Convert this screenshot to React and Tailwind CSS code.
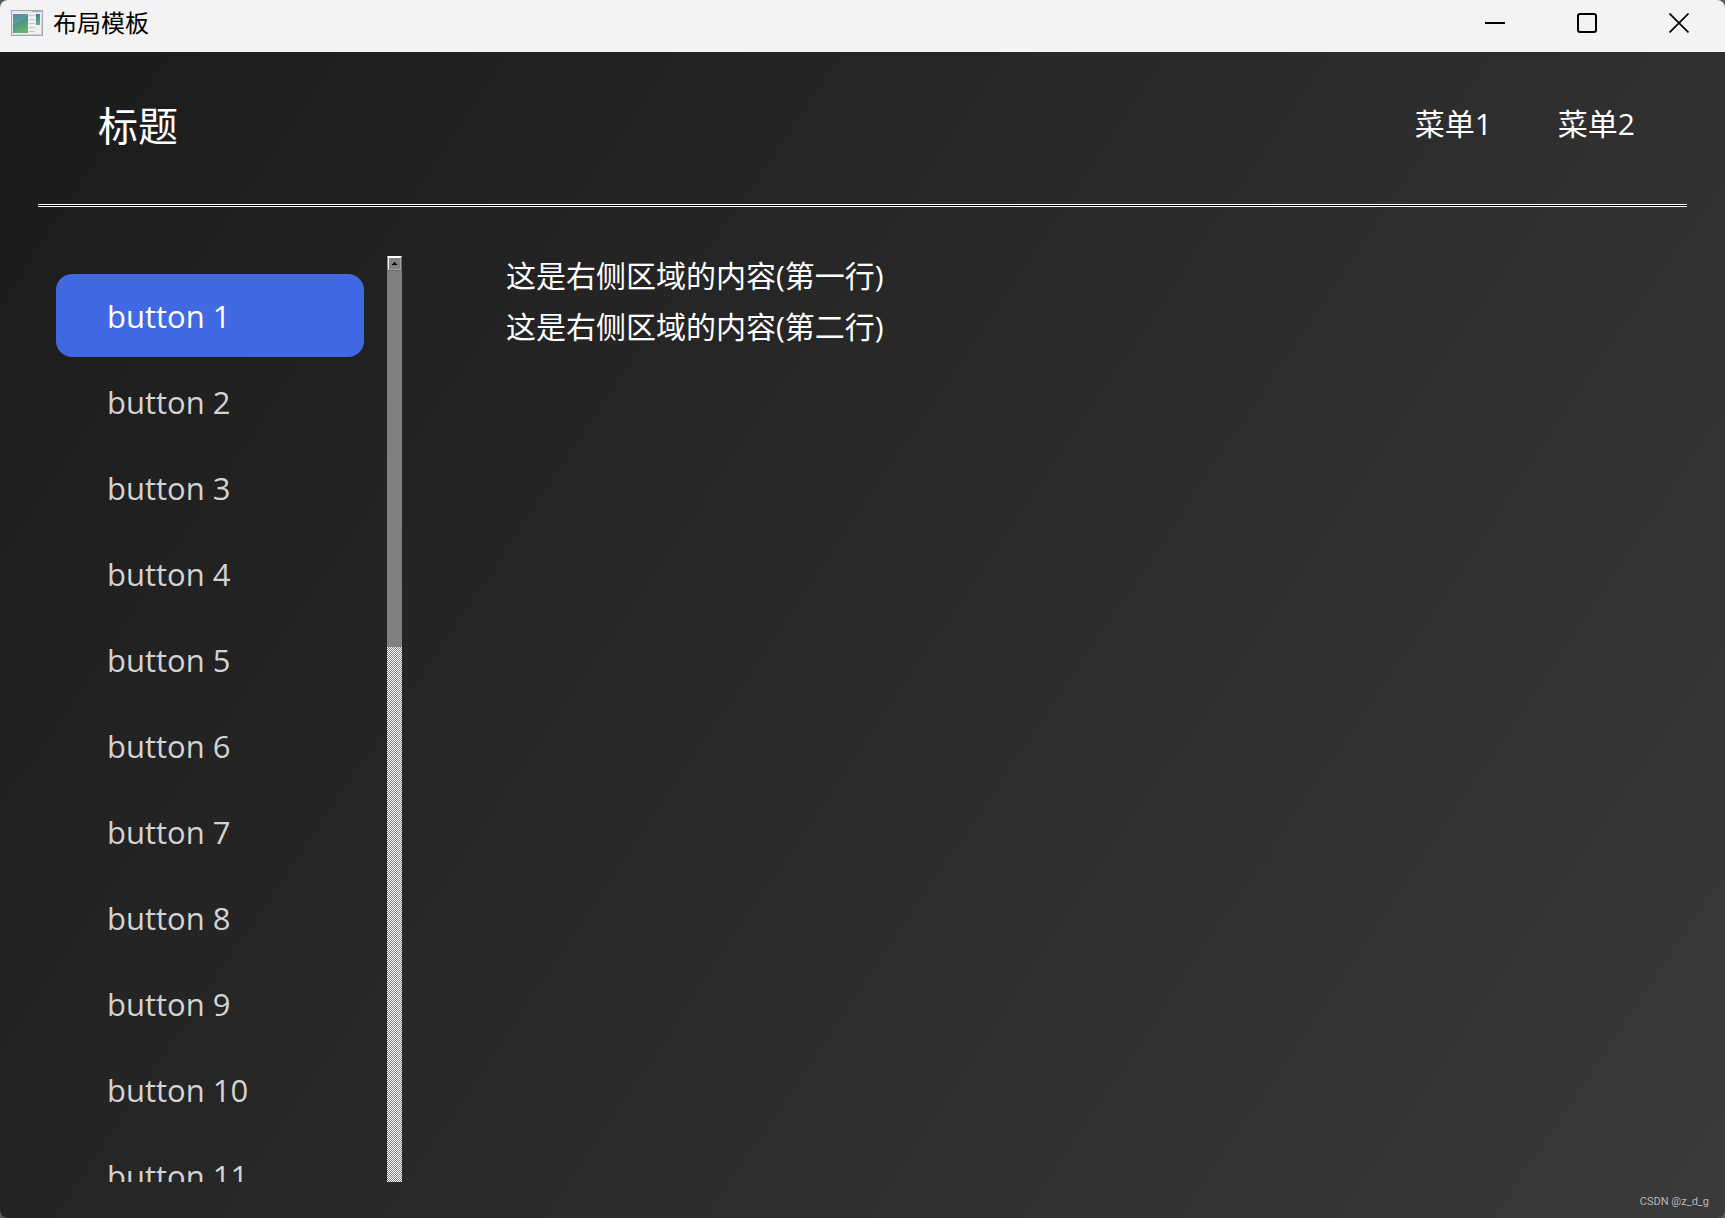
import React, { useState } from 'react';

const menus = ['菜单1', '菜单2'];
const buttons = Array.from({ length: 11 }, (_, i) => `button ${i + 1}`);
const lines = ['这是右侧区域的内容(第一行)', '这是右侧区域的内容(第二行)'];

const WindowIcon = () => (
  <svg width="32" height="26" viewBox="0 0 32 26" aria-hidden="true">
    <defs>
      <linearGradient id="pane" x1="0" y1="0" x2="0.3" y2="1">
        <stop offset="0" stopColor="#44739c" />
        <stop offset="0.5" stopColor="#4b9590" />
        <stop offset="1" stopColor="#62b169" />
      </linearGradient>
      <linearGradient id="frame" x1="0" y1="0" x2="1" y2="1">
        <stop offset="0" stopColor="#eceef1" />
        <stop offset="1" stopColor="#c9ccd3" />
      </linearGradient>
    </defs>
    <rect x="0.5" y="0.5" width="31" height="25" fill="url(#frame)" stroke="#a3a7b1" />
    <rect x="2" y="3" width="28" height="21" fill="#eff0f2" />
    <rect x="2" y="4" width="15" height="19" fill="url(#pane)" />
    <path d="M2 14 Q10 12 17 5 V4 H2 Z" fill="#ffffff" opacity="0.12" />
    <path d="M18 5.5h6M18 9.5h6M18 13.5h6M18 17.5h6M18 21.5h6" stroke="#c3c6cc" />
    <rect x="25" y="4" width="4" height="11" fill="url(#pane)" />
    <path d="M21 1.5h9" stroke="#a8acb7" />
  </svg>
);

const TitleBar = () => (
  <header className="flex h-[52px] shrink-0 items-start justify-between bg-[#f3f3f3] text-black">
    <div className="flex h-[46px] items-center gap-[10px] pl-[11px]">
      <WindowIcon />
      <span className="text-[24px] leading-8">布局模板</span>
    </div>
    <div className="flex h-[46px]">
      <button type="button" aria-label="Minimize" className="flex w-[92px] items-center justify-center">
        <svg width="20" height="20" viewBox="0 0 20 20" stroke="currentColor" strokeWidth="2">
          <path d="M0 10h20" />
        </svg>
      </button>
      <button type="button" aria-label="Maximize" className="flex w-[92px] items-center justify-center">
        <svg width="20" height="20" viewBox="0 0 20 20" fill="none" stroke="currentColor" strokeWidth="2">
          <rect x="1" y="1" width="18" height="18" rx="2" />
        </svg>
      </button>
      <button type="button" aria-label="Close" className="flex w-[92px] items-center justify-center">
        <svg width="20" height="20" viewBox="0 0 20 20" stroke="currentColor" strokeWidth="1.7">
          <path d="M0.5 0.5l19 19M19.5 0.5l-19 19" />
        </svg>
      </button>
    </div>
  </header>
);

const ScrollTrack = () => (
  <div className="flex w-[15px] flex-col bg-white" aria-hidden="true">
    <div className="flex h-[15px] shrink-0 items-center justify-center border border-t-white border-r-[#696969] border-b-[#696969] border-l-[#808080] bg-[#808080]">
      <div className="flex h-full w-full items-center justify-center border border-t-white border-r-[#a0a0a0] border-b-[#a0a0a0] border-l-white">
        <svg width="5" height="3" viewBox="0 0 5 3" shapeRendering="crispEdges">
          <path d="M2 0h1v1h1v1h1v1H0V2h1V1h1z" fill="#000" />
        </svg>
      </div>
    </div>
    <div className="h-[376px] shrink-0 bg-[#808080]" />
    {/* dithered groove */}
    <div className="flex-1 bg-[conic-gradient(#808080_25%,#fff_0_50%,#808080_0_75%,#fff_0)] bg-[length:2px_2px]" />
  </div>
);

const App = () => {
  const [active, setActive] = useState(0);

  return (
    <div className="flex h-screen flex-col overflow-hidden bg-[#5a5a5a] font-['Open_Sans','Noto_Sans_CJK_SC',sans-serif]">
      <div className="flex min-h-0 flex-1 flex-col overflow-hidden rounded-lg">
        <TitleBar />
        <div className="relative flex min-h-0 flex-1 flex-col bg-linear-124 from-[#1b1b1b] to-[#3a3a3a] px-[38px] pb-9 text-white">
          <div className="flex h-[152px] shrink-0 items-start justify-between px-[52px] pt-[50px]">
            <h1 className="px-2 text-[40px] leading-[48px]">标题</h1>
            <nav className="flex gap-[66px]">
              {menus.map((menu) => (
                <a key={menu} href="#" className="text-[30px] leading-[44px]">
                  {menu}
                </a>
              ))}
            </nav>
          </div>
          <hr className="shrink-0 border-t-[3px] border-double border-white bg-black" />

          <div className="flex min-h-0 flex-1 pt-[49px]">
            <aside className="flex w-[364px] shrink-0 justify-between">
              <div className="flex flex-1 flex-col gap-[3px] overflow-y-auto pt-[18px] pr-[23px] pl-[18px] [scrollbar-width:none]">
                {buttons.map((label, idx) => (
                  <button
                    key={label}
                    type="button"
                    onClick={() => setActive(idx)}
                    className={`h-[83px] shrink-0 rounded-2xl pl-[51px] text-left text-[31px] leading-10 ${idx === active ? 'bg-[#4169e1] text-white' : 'text-[#d3d3d3]'}`}
                  >
                    {label}
                  </button>
                ))}
              </div>
              <ScrollTrack />
            </aside>
            <main className="-mt-[6px] flex-1 pl-[104px]">
              {lines.map((line) => (
                <p key={line} className="text-[30px] leading-[51px]">
                  {line}
                </p>
              ))}
            </main>
          </div>

          <span className="absolute right-4 bottom-2 font-['Roboto',sans-serif] text-[11px] leading-4 text-[#b8b8b8]">CSDN @z_d_g</span>
        </div>
      </div>
    </div>
  );
};

export default App;
